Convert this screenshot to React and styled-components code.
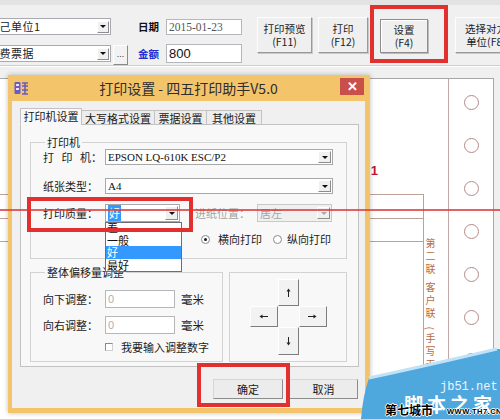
import React from "react";
import styled, { createGlobalStyle } from "styled-components";

const GlobalStyle = createGlobalStyle`
  html, body { margin: 0; padding: 0; }
  body {
    background: #f0f0f0;
    font-family: "Noto Sans CJK SC", "Liberation Sans", sans-serif;
    font-size: 11px;
    color: #1c1c1c;
  }
  * { box-sizing: border-box; }
`;

const Screen = styled.div`
  position: relative;
  width: 500px;
  height: 419px;
  overflow: hidden;
  background: #f0f0f0;
  display: flex;
  flex-direction: column;
`;

/* ---------- main window toolbar ---------- */
const Toolbar = styled.div`
  height: 66px;
  flex: none;
  border-top: 5px solid #e3e3e3;
  border-bottom: 1px solid #cfcfcf;
  padding-top: 13px;
  display: flex;
`;
const FormBlock = styled.div`
  display: flex;
  flex-direction: column;
  gap: 10px;
`;
const FormRow = styled.div`
  display: flex;
  align-items: center;
  height: 17px;
`;
const Combo = styled.div`
  width: 127px;
  height: 17px;
  margin-left: -16px;
  background: #fff;
  border: 1px solid #a9abb0;
  display: flex;
  align-items: center;
  padding: 0 1px 0 3px;
`;
const ComboText = styled.span`
  flex: 1;
  white-space: nowrap;
  letter-spacing: 0.5px;
  line-height: 15px;
`;
const Bevel = styled.span`
  width: ${(p) => p.$w || 12}px;
  height: ${(p) => p.$h || 12}px;
  flex: none;
  background: #f0f0f0;
  border: 1px solid;
  border-color: #fff #8d8d8d #8d8d8d #fff;
  display: flex;
  align-items: center;
  justify-content: center;
`;
const Caret = styled.i`
  width: 0;
  height: 0;
  border-left: 3px solid transparent;
  border-right: 3px solid transparent;
  border-top: 3px solid ${(p) => (p.$muted ? "#a8a8a8" : "#111")};
`;
const MoreBtn = styled.span`
  width: 15px;
  height: 20px;
  margin-left: 2px;
  margin-top: 3px;
  background: #f2f2f2;
  border: 1px solid;
  border-color: #fff #8a8a8a #8a8a8a #fff;
  font-family: "Liberation Sans", sans-serif;
  font-size: 9px;
  line-height: 16px;
  text-align: center;
  color: #333;
`;
const FieldLabel = styled.span`
  width: 22px;
  margin-left: ${(p) => p.$gap}px;
  font-weight: 700;
  font-size: 10.5px;
  color: ${(p) => (p.$blue ? "#1f2fd0" : "#111")};
  white-space: nowrap;
`;
const TextBox = styled.span`
  width: 76px;
  height: ${(p) => (p.$big ? 19 : 16)}px;
  margin-left: 6px;
  background: #fff;
  border: 1px solid #b5b7bb;
  padding-left: 2px;
  display: flex;
  align-items: center;
  font-family: ${(p) => (p.$big ? '"Liberation Sans"' : '"Liberation Serif"')}, sans-serif;
  font-size: ${(p) => (p.$big ? 13 : 11.5)}px;
  color: ${(p) => (p.$big ? "#111" : "#555")};
`;
const ToolGroup = styled.div`
  display: flex;
  align-items: flex-start;
  margin-left: 15px;
  margin-top: -1px;
`;
const ToolButton = styled.div`
  width: ${(p) => p.$w}px;
  height: ${(p) => (p.$active ? 34 : 36)}px;
  margin-left: ${(p) => p.$ml || 0}px;
  margin-top: ${(p) => (p.$active ? 2 : 0)}px;
  flex: none;
  background: #efefef;
  border: 1px solid;
  border-color: ${(p) => (p.$active ? "#8e8e8e" : "#fdfdfd #999 #999 #fdfdfd")};
  box-shadow: ${(p) => (p.$active ? "1px 1px 0 #bbb, inset 1px 1px 0 #fff" : "1px 1px 0 #c8c8c8")};
  display: flex;
  flex-direction: column;
  align-items: center;
  justify-content: center;
  line-height: 13px;
  font-size: 10.5px;
  color: #222;
  white-space: nowrap;
`;

/* ---------- document behind the dialog ---------- */
const Sheet = styled.div`
  flex: 1;
  border-top: 1px solid #fff;
  padding-top: 11px;
  display: flex;
`;
const Page = styled.div`
  width: 494px;
  flex: none;
  background: #fff;
  border-top: 1px solid #a7a7a7;
  border-right: 1px solid #a7a7a7;
  display: flex;
`;
const PageMain = styled.div`
  flex: 1;
  display: flex;
  border-right: 1px solid #c4a8a8;
`;
const LeftCol = styled.div`
  flex: 1;
  display: flex;
  flex-direction: column;
  align-items: flex-end;
  padding-top: 85px;
`;
const RedNum = styled.span`
  margin-right: 45px;
  font-family: "Liberation Sans", sans-serif;
  font-weight: 700;
  font-size: 13px;
  line-height: 13px;
  color: #c4142c;
`;
const RuleRows = styled.div`
  align-self: stretch;
  margin-top: 17px;
`;
const RuleRow = styled.div`
  height: 24px;
  border-top: 1px solid #bda197;
  border-bottom: ${(p) => (p.$last ? "1px solid #bda197" : "none")};
`;
const CopyLabel = styled.div`
  width: 25px;
  margin-top: 115px;
  border-left: 1px solid #bda197;
  padding: 44px 10px 0 0;
  writing-mode: vertical-rl;
  font-size: 10px;
  letter-spacing: 3px;
  color: #b46c3e;
  white-space: nowrap;
`;
const HoleColumn = styled.div`
  width: 44px;
  display: flex;
  flex-direction: column;
  align-items: center;
  padding-top: 16px;
  gap: 28px;
`;
const Hole = styled.span`
  width: 15px;
  height: 15px;
  flex: none;
  border-radius: 50%;
  border: 1px solid #b48a8a;
`;

/* ---------- dialog ---------- */
const Dialog = styled.div`
  position: absolute;
  left: 8px;
  top: 75px;
  width: 362px;
  height: 338px;
  background: #f4c46b;
  padding: 0 5px 5px 4px;
  display: flex;
  flex-direction: column;
  box-shadow: 0 0 5px rgba(0, 0, 0, 0.25);
  z-index: 2;
`;
const TitleBar = styled.div`
  height: 26px;
  flex: none;
  display: grid;
  grid-template-columns: 1fr auto 1fr;
  align-items: center;
`;
const AppIcon = styled.svg`
  width: 15px;
  height: 14px;
  margin-left: 2px;
`;
const Title = styled.span`
  font-size: 14px;
  color: #2d2d2d;
  white-space: nowrap;
`;
const CloseBtn = styled.span`
  justify-self: end;
  align-self: start;
  margin-top: 3px;
  margin-right: 1px;
  width: 24px;
  height: 17px;
  background: #c9504a;
  color: #fff;
  font-family: "Liberation Sans", sans-serif;
  font-size: 13px;
  font-weight: 700;
  line-height: 17px;
  text-align: center;
`;
const Client = styled.div`
  flex: 1;
  background: #f0f0f0;
  padding: 8px 6px 8px 8px;
  display: flex;
  flex-direction: column;
`;
const Tabs = styled.div`
  height: 16px;
  display: flex;
  align-items: flex-end;
  position: relative;
  z-index: 1;
  margin-bottom: -1px;
`;
const Tab = styled.span`
  width: ${(p) => p.$w}px;
  height: ${(p) => (p.$active ? 17 : 15)}px;
  margin-left: ${(p) => (p.$first ? 0 : -1)}px;
  border: 1px solid #c2c2c2;
  border-bottom: ${(p) => (p.$active ? "1px solid #f8f8f8" : "1px solid #c2c2c2")};
  background: ${(p) => (p.$active ? "#f8f8f8" : "#ededed")};
  text-align: center;
  line-height: 14px;
  white-space: nowrap;
  color: #1a1a1a;
`;
const Panel = styled.div`
  height: 243px;
  flex: none;
  background: #f8f8f8;
  border: 1px solid #c2c2c2;
  padding: 11px 11px 0 9px;
`;
const Group = styled.fieldset`
  margin: 0;
  min-width: 0;
  border: 1px solid #d2d2d2;
  padding: 0 13px ${(p) => p.$pb || 0}px 12px;
`;
const Legend = styled.legend`
  margin-left: 2px;
  padding: 0 2px;
  font-size: 11px;
  line-height: 13px;
  color: #1a1a1a;
`;
const FieldRow = styled.div`
  display: flex;
  align-items: center;
  height: ${(p) => p.$h || 16}px;
  margin-top: ${(p) => p.$mt || 0}px;
`;
const RowLabel = styled.span`
  width: 62px;
  flex: none;
  margin-left: ${(p) => p.$ml || 0}px;
  white-space: nowrap;
  word-spacing: 5px;
  color: ${(p) => (p.$muted ? "#a3a3a3" : "#1a1a1a")};
`;
const Select = styled.div`
  width: ${(p) => p.$w}px;
  height: 100%;
  flex: none;
  background: ${(p) => (p.$muted ? "#f0f0f0" : "#fff")};
  border: 1px solid ${(p) => (p.$muted ? "#c9c9c9" : "#a8a8a8")};
  display: flex;
  align-items: center;
  padding: 0 1px 0 1px;
`;
const SelectText = styled.span`
  flex: 1;
  white-space: nowrap;
  overflow: hidden;
  font-family: ${(p) => (p.$latin ? '"Liberation Serif", serif' : "inherit")};
  font-size: 11px;
  color: ${(p) => (p.$muted ? "#a3a3a3" : "#111")};
  padding-left: 1px;
`;
const Picked = styled.span`
  background: #3399ff;
  color: #fff;
  padding: 0 1px;
`;
const QualityWrap = styled.div`
  position: relative;
  height: 18px;
`;
const DropList = styled.div`
  position: absolute;
  left: 0;
  top: 18px;
  width: 77px;
  height: 50px;
  overflow: hidden;
  background: #fff;
  border: 1px solid #6e6e6e;
  z-index: 3;
`;
const DropItem = styled.div`
  height: 12.5px;
  line-height: 12.5px;
  padding-left: 1px;
  margin-top: ${(p) => p.$mt || 0}px;
  background: ${(p) => (p.$on ? "#3399ff" : "transparent")};
  color: ${(p) => (p.$on ? "#fff" : "#111")};
`;
const RadioRow = styled.div`
  display: flex;
  align-items: center;
  height: 14px;
  margin-top: 10px;
  margin-left: 158px;
`;
const Radio = styled.span`
  width: 9px;
  height: 9px;
  flex: none;
  margin-left: ${(p) => p.$ml || 0}px;
  border-radius: 50%;
  border: 1px solid #8a8a8a;
  background: #fff;
  display: flex;
  align-items: center;
  justify-content: center;
  &::after {
    content: "";
    width: 3px;
    height: 3px;
    border-radius: 50%;
    background: ${(p) => (p.$on ? "#1a1a1a" : "transparent")};
  }
`;
const OptionText = styled.span`
  margin-left: ${(p) => p.$ml || 6}px;
  white-space: nowrap;
`;
const BottomRow = styled.div`
  display: flex;
  gap: 6px;
  margin-top: 7px;
  align-items: stretch;
`;
const OffsetGroup = styled(Group)`
  width: 193px;
  flex: none;
`;
const PadGroup = styled.div`
  flex: 1;
  margin-top: 6px;
  border: 1px solid #d2d2d2;
  display: flex;
  align-items: center;
  justify-content: center;
`;
const NumBox = styled.span`
  width: 70px;
  height: 18px;
  flex: none;
  background: #fff;
  border: 1px solid #b5b7bb;
  padding-left: 2px;
  font-family: "Liberation Sans", sans-serif;
  font-size: 11px;
  line-height: 16px;
  color: #b0b0b0;
`;
const Unit = styled.span`
  margin-left: 6px;
  font-size: 11.5px;
`;
const CheckRow = styled.div`
  display: flex;
  align-items: center;
  height: 12px;
  margin-top: 7px;
  margin-left: 62px;
`;
const CheckBox = styled.span`
  width: 8px;
  height: 8px;
  border: 1px solid #8a8a8a;
  border-right-color: #d0d0d0;
  border-bottom-color: #d0d0d0;
  background: #fff;
`;
const Pad = styled.div`
  display: grid;
  grid-template-columns: 28px 21px 28px;
  grid-template-rows: 27px 21px 28px;
`;
const PadKey = styled.span`
  grid-column: ${(p) => p.$col};
  grid-row: ${(p) => p.$row};
  background: #f2f2f2;
  border: 1px solid;
  border-color: #fff #7d7d7d #7d7d7d #fff;
  display: flex;
  align-items: center;
  justify-content: center;
`;
const ButtonRow = styled.div`
  display: flex;
  justify-content: flex-end;
  gap: 6px;
  margin-top: 12px;
  padding-right: 1px;
`;
const PushButton = styled.span`
  width: ${(p) => p.$w}px;
  height: 20px;
  background: #ececec;
  border: 1px solid;
  border-color: #d6d6d6 #8c8c8c #8c8c8c #d6d6d6;
  text-align: center;
  line-height: 18px;
  color: #1a1a1a;
`;

/* ---------- overlays ---------- */
const RedLine = styled.div`
  position: absolute;
  left: 0;
  right: 0;
  top: 209px;
  height: 2px;
  background: rgba(220, 60, 60, 0.8);
  z-index: 4;
`;
const Callout = styled.div`
  position: absolute;
  left: ${(p) => p.$x}px;
  top: ${(p) => p.$y}px;
  width: ${(p) => p.$w}px;
  height: ${(p) => p.$h}px;
  border: 4px solid #e1302e;
  z-index: 5;
`;
const Watermark = styled.div`
  position: absolute;
  right: 0;
  bottom: 0;
  width: 145px;
  height: 79px;
  z-index: 6;
`;
const WaveSvg = styled.svg`
  position: absolute;
  inset: 0;
`;
const MarkText = styled.span`
  position: absolute;
  left: ${(p) => p.$x}px;
  top: ${(p) => p.$y}px;
  white-space: nowrap;
`;
const SiteUrl = styled(MarkText)`
  font-family: "Liberation Mono", monospace;
  font-size: 12px;
  color: #eaf5ff;
`;
const SiteName = styled(MarkText)`
  font-size: 19px;
  font-weight: 700;
  letter-spacing: 4px;
  color: #fff;
`;
const CityName = styled(MarkText)`
  font-size: 12px;
  font-weight: 700;
  color: #000;
  text-shadow: 1px 0 #fff, -1px 0 #fff, 0 1px #fff, 0 -1px #fff;
`;
const CityUrl = styled(MarkText)`
  font-family: "Liberation Sans", sans-serif;
  font-size: 7.5px;
  font-weight: 700;
  letter-spacing: 0.5px;
  color: #000;
  text-shadow: 1px 0 #fff, -1px 0 #fff, 0 1px #fff, 0 -1px #fff;
`;

const Arrow = ({ dir }) => {
  const rot = { up: 0, right: 90, down: 180, left: 270 }[dir];
  return (
    <svg width="9" height="9" viewBox="0 0 9 9">
      <g transform={`rotate(${rot} 4.5 4.5)`}>
        <line x1="4.5" y1="3" x2="4.5" y2="9" stroke="#222" strokeWidth="1" />
        <path d="M2.5 3.5 L4.5 0.5 L6.5 3.5 Z" fill="#222" />
      </g>
    </svg>
  );
};

const SelectBox = ({ w, children, latin, muted }) => (
  <Select $w={w} $muted={muted}>
    <SelectText $latin={latin} $muted={muted}>{children}</SelectText>
    <Bevel $w={13} $h={12}>
      <Caret $muted={muted} />
    </Bevel>
  </Select>
);

export default function App() {
  return (
    <>
      <GlobalStyle />
      <Screen>
        <Toolbar>
          <FormBlock>
            <FormRow>
              <Combo>
                <ComboText>自己单位1</ComboText>
                <Bevel><Caret /></Bevel>
              </Combo>
              <FieldLabel $gap={27}>日期</FieldLabel>
              <TextBox>2015-01-23</TextBox>
            </FormRow>
            <FormRow>
              <Combo>
                <ComboText>收费票据</ComboText>
                <Bevel><Caret /></Bevel>
              </Combo>
              <MoreBtn>...</MoreBtn>
              <FieldLabel $gap={10} $blue>金额</FieldLabel>
              <TextBox $big>800</TextBox>
            </FormRow>
          </FormBlock>
          <ToolGroup>
            <ToolButton $w={55}><span>打印预览</span><span>(F11)</span></ToolButton>
            <ToolButton $w={50} $ml={6}><span>打印</span><span>(F12)</span></ToolButton>
            <ToolButton $w={48} $ml={12} $active><span>设置</span><span>(F4)</span></ToolButton>
            <ToolButton $w={62} $ml={27}><span>选择对方</span><span>单位(F8)</span></ToolButton>
          </ToolGroup>
        </Toolbar>

        <Sheet>
          <Page>
            <PageMain>
              <LeftCol>
                <RedNum>1</RedNum>
                <RuleRows>
                  <RuleRow />
                  <RuleRow $last />
                </RuleRows>
              </LeftCol>
              <CopyLabel>第二联 客户联 (手写无效)</CopyLabel>
            </PageMain>
            <HoleColumn>
              {[0, 1, 2, 3, 4, 5, 6].map((i) => (
                <Hole key={i} />
              ))}
            </HoleColumn>
          </Page>
        </Sheet>

        <Dialog>
          <TitleBar>
            <AppIcon viewBox="0 0 15 14">
              <rect x="0.5" y="1" width="6" height="12" rx="1" fill="#6d5bc4" />
              <rect x="2" y="3" width="3" height="2" fill="#e8e2ff" />
              <rect x="2" y="7" width="3" height="2" fill="#e8e2ff" />
              <path d="M8 2 H14 M8 5 H14 M11 2 V13 M8 9 H14 M8 13 H14" stroke="#6d5bc4" strokeWidth="1.6" fill="none" />
            </AppIcon>
            <Title>打印设置 - 四五打印助手V5.0</Title>
            <CloseBtn>✕</CloseBtn>
          </TitleBar>
          <Client>
            <Tabs>
              <Tab $w={62} $first $active>打印机设置</Tab>
              <Tab $w={74}>大写格式设置</Tab>
              <Tab $w={53}>票据设置</Tab>
              <Tab $w={56}>其他设置</Tab>
            </Tabs>
            <Panel>
              <Group $pb={12}>
                <Legend>打印机</Legend>
                <FieldRow>
                  <RowLabel>打 印 机：</RowLabel>
                  <SelectBox w={228} latin>EPSON LQ-610K ESC/P2</SelectBox>
                </FieldRow>
                <FieldRow $mt={13}>
                  <RowLabel>纸张类型：</RowLabel>
                  <SelectBox w={228} latin>A4</SelectBox>
                </FieldRow>
                <FieldRow $mt={10} $h={18}>
                  <RowLabel>打印质量：</RowLabel>
                  <QualityWrap>
                    <Select $w={75}>
                      <SelectText><Picked>好</Picked></SelectText>
                      <Bevel $w={13} $h={14}><Caret /></Bevel>
                    </Select>
                    <DropList>
                      <DropItem $mt={-2}>差</DropItem>
                      <DropItem>一般</DropItem>
                      <DropItem $on>好</DropItem>
                      <DropItem>最好</DropItem>
                    </DropList>
                  </QualityWrap>
                  <RowLabel $ml={15} $muted>进纸位置：</RowLabel>
                  <SelectBox w={75} muted>居左</SelectBox>
                </FieldRow>
                <RadioRow>
                  <Radio $on />
                  <OptionText $ml={8}>横向打印</OptionText>
                  <Radio $ml={11} />
                  <OptionText $ml={5}>纵向打印</OptionText>
                </RadioRow>
              </Group>
              <BottomRow>
                <OffsetGroup $pb={8}>
                  <Legend>整体偏移量调整</Legend>
                  <FieldRow $mt={11} $h={18}>
                    <RowLabel>向下调整：</RowLabel>
                    <NumBox>0</NumBox>
                    <Unit>毫米</Unit>
                  </FieldRow>
                  <FieldRow $mt={8} $h={18}>
                    <RowLabel>向右调整：</RowLabel>
                    <NumBox>0</NumBox>
                    <Unit>毫米</Unit>
                  </FieldRow>
                  <CheckRow>
                    <CheckBox />
                    <OptionText $ml={8}>我要输入调整数字</OptionText>
                  </CheckRow>
                </OffsetGroup>
                <PadGroup>
                  <Pad>
                    <PadKey $col={2} $row={1}><Arrow dir="up" /></PadKey>
                    <PadKey $col={1} $row={2}><Arrow dir="left" /></PadKey>
                    <PadKey $col={3} $row={2}><Arrow dir="right" /></PadKey>
                    <PadKey $col={2} $row={3}><Arrow dir="down" /></PadKey>
                  </Pad>
                </PadGroup>
              </BottomRow>
            </Panel>
            <ButtonRow>
              <PushButton $w={70}>确定</PushButton>
              <PushButton $w={69}>取消</PushButton>
            </ButtonRow>
          </Client>
        </Dialog>

        <RedLine />
        <Callout $x={370} $y={5} $w={78} $h={58} />
        <Callout $x={27} $y={197} $w={166} $h={35} />
        <Callout $x={197} $y={363} $w={93} $h={44} />

        <Watermark>
          <WaveSvg viewBox="0 0 145 79" width="145" height="79">
            <path d="M14 38 Q70 26 142 9 L145 9 L145 79 L6 79 Q8 55 14 38 Z" fill="#4ea7dd" />
            <path d="M14 38 Q70 26 142 9" stroke="#bfe2f7" strokeWidth="3" fill="none" />
          </WaveSvg>
          <SiteUrl $x={85} $y={40}>jb51.net</SiteUrl>
          <SiteName $x={49} $y={50}>脚本之家</SiteName>
          <CityName $x={30} $y={61}>第七城市</CityName>
          <CityUrl $x={92} $y={67}>WWW.TH7.CN</CityUrl>
        </Watermark>
      </Screen>
    </>
  );
}
